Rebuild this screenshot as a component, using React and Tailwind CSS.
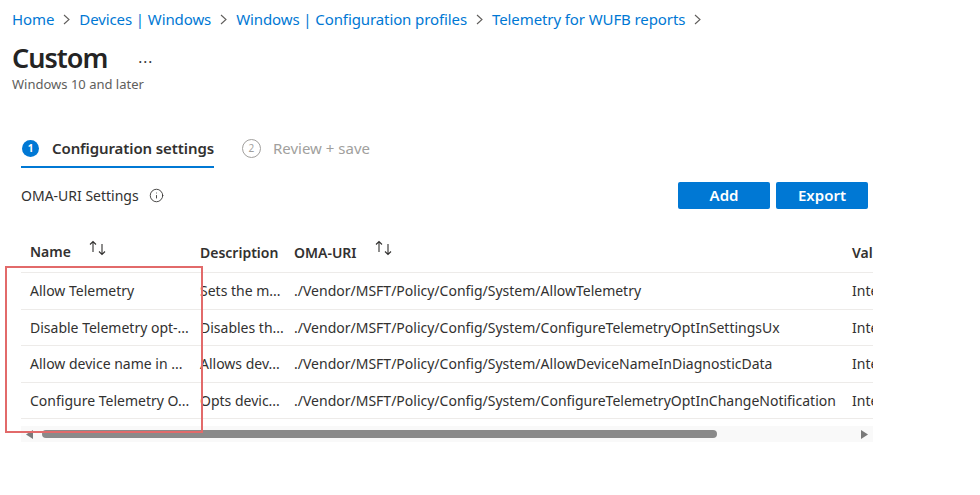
import React from "react";
import { Info } from "lucide-react";

const crumbs = [
  "Home",
  "Devices | Windows",
  "Windows | Configuration profiles",
  "Telemetry for WUFB reports",
];

const rows = [
  {
    name: "Allow Telemetry",
    desc: "Sets the m...",
    uri: "./Vendor/MSFT/Policy/Config/System/AllowTelemetry",
    val: "Integer",
  },
  {
    name: "Disable Telemetry opt-...",
    desc: "Disables th...",
    uri: "./Vendor/MSFT/Policy/Config/System/ConfigureTelemetryOptInSettingsUx",
    val: "Integer",
  },
  {
    name: "Allow device name in ...",
    desc: "Allows dev...",
    uri: "./Vendor/MSFT/Policy/Config/System/AllowDeviceNameInDiagnosticData",
    val: "Integer",
  },
  {
    name: "Configure Telemetry O...",
    desc: "Opts devic...",
    uri: "./Vendor/MSFT/Policy/Config/System/ConfigureTelemetryOptInChangeNotification",
    val: "Integer",
  },
];

function Chevron() {
  return (
    <svg width="7" height="11" viewBox="0 0 7 11" className="shrink-0">
      <path d="M1 1 L6 5.5 L1 10" fill="none" stroke="#605e5c" strokeWidth="1.1" />
    </svg>
  );
}

function SortIcon() {
  return (
    <svg width="18" height="16" viewBox="0 0 18 16" className="shrink-0">
      <g fill="none" stroke="#323130" strokeWidth="1.1">
        <path d="M4 12V1.5 M1 4.5 L4 1.5 L7 4.5" />
        <path d="M13 4V14.5 M10 11.5 L13 14.5 L16 11.5" />
      </g>
    </svg>
  );
}

export default function App() {
  return (
    <div className="relative w-[980px] h-[495px] bg-white text-[#323130] font-['Noto_Sans','Open_Sans',sans-serif] overflow-hidden">
      {/* breadcrumb */}
      <nav className="flex items-center gap-[9px] pl-3 pt-[9px] h-[29px] text-[15px] leading-[20px]">
        {crumbs.map((c) => (
          <React.Fragment key={c}>
            <span className="text-[#0078d4] whitespace-nowrap tracking-[-0.1px]">{c}</span>
            <Chevron />
          </React.Fragment>
        ))}
      </nav>

      {/* title */}
      <div className="flex items-center pl-3 mt-[11px] h-[36px]">
        <h1 className="text-[27px] font-semibold leading-[36px] tracking-[-1px] text-[#242424]">Custom</h1>
        <span className="ml-[31px] text-[15px] leading-none tracking-[1px] text-[#323130] -mt-[2px]">...</span>
      </div>
      <div className="pl-3 text-[13px] leading-[18px] text-[#605e5c] -mt-[1px]">Windows 10 and later</div>

      {/* wizard tabs */}
      <div className="flex items-end gap-[28px] pl-[21px] mt-[43px]">
        <div className="flex items-center gap-[13px] h-[32px] pb-[6px] border-b-2 border-[#0078d4]">
          <span className="flex items-center justify-center w-[17px] h-[17px] rounded-full bg-[#0078d4] text-white text-[10px] font-bold ml-[1px]">1</span>
          <span className="text-[15px] font-semibold leading-[20px] whitespace-nowrap tracking-[-0.1px]">Configuration settings</span>
        </div>
        <div className="flex items-center gap-[12px] h-[32px] pb-[8px]">
          <span className="flex items-center justify-center w-[19px] h-[19px] rounded-full border-[1.5px] border-[#a19f9d] text-[#a19f9d] text-[10px]">2</span>
          <span className="text-[15px] leading-[20px] text-[#a19f9d] whitespace-nowrap">Review + save</span>
        </div>
      </div>

      {/* OMA-URI toolbar */}
      <div className="flex items-center justify-between ml-[21px] w-[847px] mt-[14px] h-[27px]">
        <div className="flex items-center gap-[10px] text-[14px]">
          <span>OMA-URI Settings</span>
          <Info size={15} strokeWidth={1.4} color="#323130" />
        </div>
        <div className="flex gap-[6px]">
          <button className="w-[92px] h-[27px] rounded-[2px] bg-[#0078d4] text-white text-[15px] font-semibold leading-none">Add</button>
          <button className="w-[92px] h-[27px] rounded-[2px] bg-[#0078d4] text-white text-[15px] font-semibold leading-none">Export</button>
        </div>
      </div>

      {/* table */}
      <div className="ml-[21px] w-[852px] mt-[23px] overflow-hidden">
        <div className="w-[1000px] text-[14px]">
          <div className="flex items-center h-[41px] border-b border-[#edebe9] font-semibold">
            <div className="w-[171px] pl-[9px] flex items-center gap-[18px] -mt-[1px]">
              <span>Name</span>
              <span className="-mt-[8px]"><SortIcon /></span>
            </div>
            <div className="w-[94px] pl-[8px]">Description</div>
            <div className="w-[558px] pl-[8px] flex items-center gap-[18px]">
              <span>OMA-URI</span>
              <span className="-mt-[8px]"><SortIcon /></span>
            </div>
            <div className="pl-[8px]">Value</div>
          </div>
          {rows.map((r) => (
            <div key={r.uri} className="flex items-center h-[36.5px] border-b border-[#edebe9] whitespace-nowrap">
              <div className="w-[171px] pl-[9px] overflow-hidden">{r.name}</div>
              <div className="w-[94px] pl-[8px] overflow-hidden">{r.desc}</div>
              <div className="w-[558px] pl-[8px] overflow-hidden">{r.uri}</div>
              <div className="pl-[8px]">{r.val}</div>
            </div>
          ))}
        </div>

        {/* horizontal scrollbar */}
        <div className="flex items-center h-[16px] mt-[7px] bg-[#f9f9f9]">
          <svg width="8" height="9" viewBox="0 0 8 9" className="ml-[5px] shrink-0">
            <path d="M7 0 L0 4.5 L7 9 Z" fill="#7a7a7a" />
          </svg>
          <div className="ml-[8px] w-[675px] h-[8px] rounded-full bg-[#8a8a8a]"></div>
          <svg width="8" height="9" viewBox="0 0 8 9" className="ml-auto mr-[4px] shrink-0">
            <path d="M0 0 L7 4.5 L0 9 Z" fill="#7a7a7a" />
          </svg>
        </div>
      </div>

      {/* annotation box */}
      <div className="absolute left-[5px] top-[266px] w-[198px] h-[167px] border-2 border-[#e26a6a] pointer-events-none"></div>
    </div>
  );
}
